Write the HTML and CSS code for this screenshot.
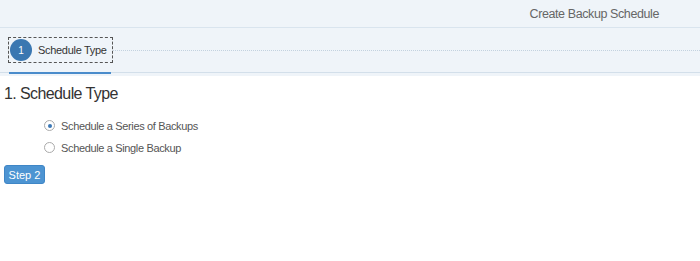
FILE: index.html
```html
<!DOCTYPE html>
<html>
<head>
<meta charset="utf-8">
<link rel="stylesheet" href="styles.css">
</head>
<body>
<div class="header"><span class="title">Create Backup Schedule</span></div>
<div class="stepper">
  <div class="step">
    <span class="circle">1</span>
    <span class="step-label">Schedule Type</span>
  </div>
  <div class="connector"></div>
</div>
<div class="indicator"><div class="bar"></div></div>
<div class="content">
  <h2 class="heading">1. Schedule Type</h2>
  <div class="options">
    <label class="option"><span class="radio checked"></span><span>Schedule a Series of Backups</span></label>
    <label class="option"><span class="radio"></span><span>Schedule a Single Backup</span></label>
  </div>
  <button class="btn">Step 2</button>
</div>
</body>
</html>
```
FILE: styles.css
```css
html, body { margin: 0; padding: 0; background: #fff; }
body { font-family: "Liberation Sans", Arial, sans-serif; width: 700px; height: 261px; overflow: hidden; }
.header {
  height: 27px;
  background: #eff4f9;
  border-bottom: 1px solid #d9e4ee;
  display: flex; align-items: center; justify-content: flex-end;
  padding-right: 41px;
}
.title { font-size: 12.5px; letter-spacing: -0.4px; color: #666; white-space: nowrap; }
.stepper {
  height: 44px;
  background: #eff4f9;
  display: flex; align-items: center;
  padding-left: 8px;
}
.step {
  display: flex; align-items: center;
  border: 1px dashed #555;
  height: 26px;
  padding: 0 4px 0 1px;
  box-sizing: border-box;
  width: 105px;
  white-space: nowrap;
}
.circle {
  width: 22px; height: 22px; border-radius: 50%; flex: none;
  background: #3a77b1; color: #fff;
  font-size: 10px; display: flex; align-items: center; justify-content: center;
}
.step-label { font-size: 11px; letter-spacing: -0.3px; color: #333; margin-left: 6px; }
.connector { flex: 1; border-top: 1px dotted #c3d2df; }
.indicator {
  height: 3px; background: #eff4f9; border-top: 1px solid #d3dfea;
  position: relative;
}
.bar { position: absolute; left: 9px; top: -1px; width: 102px; height: 2px; background: #4a8ccb; }
.content { padding: 0 4px; }
.heading { margin: 9px 0 0; font-weight: normal; font-size: 16px; letter-spacing: -0.6px; color: #333; }
.options { padding-left: 40px; margin-top: 16px; display: flex; flex-direction: column; gap: 9px; }
.option { display: flex; align-items: center; font-size: 11px; letter-spacing: -0.35px; color: #555; height: 13px; white-space: nowrap; }
.radio {
  width: 11px; height: 11px; border-radius: 50%; border: 1px solid #aaa; box-sizing: border-box;
  margin-right: 6px; background: #fff; position: relative; flex: none;
}
.radio.checked::after {
  content: ""; position: absolute; left: 2.5px; top: 2.5px; width: 4px; height: 4px; border-radius: 50%; background: #3c78b5;
}
.btn {
  display: block;
  margin-top: 11px;
  background: #4d94d2; color: #fff; border: 1px solid #3f86c6; border-radius: 3px;
  font-family: "Liberation Sans", Arial, sans-serif; font-size: 11px;
  height: 19px; width: 41px; padding: 0;
}
```
